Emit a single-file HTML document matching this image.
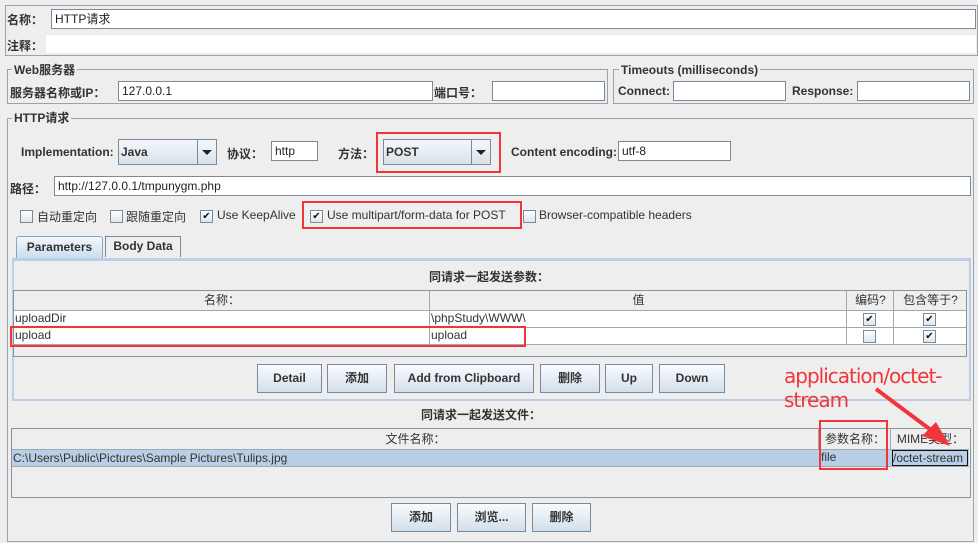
<!DOCTYPE html>
<html><head><meta charset="utf-8"><style>
*{box-sizing:border-box;margin:0;padding:0}
body{width:978px;height:543px;background:#eeeeee;position:relative;overflow:hidden;font-family:"Liberation Sans","Noto Sans CJK SC",sans-serif;font-size:12px;color:#333}
div,span{position:absolute}
.b{font-weight:bold;color:#333}
.inp{background:#fff;border:1px solid #7a8a99;height:20px;padding:2px 3px;line-height:14px;color:#222;white-space:nowrap}
.fs{border:1px solid #9aa3ad}
.lg{background:#eeeeee;padding:0 2px;font-weight:bold;color:#333;line-height:14px}
.btn{border:1px solid #7a8a99;background:linear-gradient(#f8fbfe,#d3dfeb);height:29px;line-height:27px;text-align:center;font-weight:bold;color:#333}
.cb{width:13px;height:13px;border:1px solid #7a8a99;background:linear-gradient(#fff,#dde6ef);font-size:10px;line-height:11px;text-align:center;color:#111}
.red{border:2px solid #f0363a}
.cell{border-right:1px solid #a0a8b0;border-bottom:1px solid #a0a8b0;height:100%;top:0;line-height:18px;padding-left:1px;white-space:nowrap}
</style></head><body>
<div class="fs" style="left:5px;top:5px;width:973px;height:51px"></div>
<div class="b" style="left:7px;top:11px">名称：</div>
<div class="inp" style="left:51px;top:9px;width:925px">HTTP请求</div>
<div class="b" style="left:7px;top:37px">注释：</div>
<div style="left:46px;top:35px;width:930px;height:18px;background:#fff"></div>

<div class="fs" style="left:7px;top:69px;width:601px;height:35px"></div>
<div class="lg" style="left:12px;top:63px">Web服务器</div>
<div class="b" style="left:10px;top:84px">服务器名称或IP：</div>
<div class="inp" style="left:118px;top:81px;width:315px">127.0.0.1</div>
<div class="b" style="left:434px;top:84px">端口号：</div>
<div class="inp" style="left:492px;top:81px;width:113px"></div>

<div class="fs" style="left:613px;top:69px;width:361px;height:35px"></div>
<div class="lg" style="left:619px;top:63px">Timeouts (milliseconds)</div>
<div class="b" style="left:618px;top:84px">Connect:</div>
<div class="inp" style="left:673px;top:81px;width:113px"></div>
<div class="b" style="left:792px;top:84px">Response:</div>
<div class="inp" style="left:857px;top:81px;width:113px"></div>

<div class="fs" style="left:7px;top:118px;width:967px;height:424px"></div>
<div class="lg" style="left:12px;top:111px">HTTP请求</div>
<div class="b" style="left:21px;top:145px">Implementation:</div>
<div style="left:118px;top:139px;width:99px;height:26px;border:1px solid #7a8a99;background:linear-gradient(#f5f8fb,#d7e1ea)"><span class="b" style="left:2px;top:5px">Java</span><span style="left:78px;top:0;width:1px;height:24px;background:#7a8a99"></span><span style="left:83px;top:10px;border-left:5px solid transparent;border-right:5px solid transparent;border-top:5px solid #222"></span></div>
<div class="b" style="left:227px;top:145px">协议：</div>
<div class="inp" style="left:271px;top:141px;width:47px">http</div>
<div class="b" style="left:338px;top:145px">方法：</div>
<div style="left:383px;top:139px;width:108px;height:26px;border:1px solid #7a8a99;background:linear-gradient(#f5f8fb,#d7e1ea)"><span class="b" style="left:2px;top:5px">POST</span><span style="left:87px;top:0;width:1px;height:24px;background:#7a8a99"></span><span style="left:92px;top:10px;border-left:5px solid transparent;border-right:5px solid transparent;border-top:5px solid #222"></span></div>
<div class="red" style="left:376px;top:132px;width:125px;height:41px"></div>
<div class="b" style="left:511px;top:145px">Content encoding:</div>
<div class="inp" style="left:618px;top:141px;width:113px">utf-8</div>
<div class="b" style="left:10px;top:180px">路径：</div>
<div class="inp" style="left:54px;top:176px;width:917px">http://127.0.0.1/tmpunygm.php</div>

<div class="cb" style="left:20px;top:210px"></div><div style="left:37px;top:208px">自动重定向</div>
<div class="cb" style="left:110px;top:210px"></div><div style="left:126px;top:208px">跟随重定向</div>
<div class="cb" style="left:200px;top:210px">✔</div><div style="left:217px;top:208px">Use KeepAlive</div>
<div class="cb" style="left:310px;top:210px">✔</div><div style="left:327px;top:208px">Use multipart/form-data for POST</div>
<div class="red" style="left:302px;top:201px;width:220px;height:28px"></div>
<div class="cb" style="left:523px;top:210px"></div><div style="left:539px;top:208px">Browser-compatible headers</div>

<div style="left:16px;top:236px;width:87px;height:23px;border:1px solid #8aa5c0;border-bottom:none;background:linear-gradient(#f3f7fb,#c9dcef);border-radius:3px 3px 0 0;text-align:center;line-height:20px;font-weight:bold;color:#333">Parameters</div>
<div style="left:105px;top:236px;width:76px;height:21px;border:1px solid #7a8a99;border-bottom:none;text-align:center;line-height:19px;font-weight:bold;color:#333">Body Data</div>
<div style="left:12px;top:258px;width:959px;height:143px;border:2px solid #b8cfe5;border-top:3px solid #b8cfe5"></div>
<div class="b" style="left:0;width:978px;text-align:center;top:268px">同请求一起发送参数：</div>
<div style="left:13px;top:290px;width:954px;height:67px;border:1px solid #8a939c;background:#eeeeee"></div>
<div style="left:14px;top:291px;width:952px;height:20px;background:#eeeeee">
<div class="cell" style="left:0;width:416px;text-align:center">名称：</div>
<div class="cell" style="left:416px;width:417px;text-align:center">值</div>
<div class="cell" style="left:833px;width:47px;text-align:center">编码?</div>
<div class="cell" style="left:880px;width:72px;text-align:center;border-right:none">包含等于?</div></div>
<div style="left:14px;top:311px;width:952px;height:17px;background:#fff">
<div class="cell" style="left:0;width:416px;line-height:15px">uploadDir</div>
<div class="cell" style="left:416px;width:417px;line-height:15px">\phpStudy\WWW\</div>
<div class="cell" style="left:833px;width:47px"></div><div class="cell" style="left:880px;width:72px;border-right:none"></div>
<div class="cb" style="left:849px;top:2px">✔</div><div class="cb" style="left:909px;top:2px">✔</div></div>
<div style="left:14px;top:328px;width:952px;height:17px;background:#fff">
<div class="cell" style="left:0;width:416px;line-height:15px">upload</div>
<div class="cell" style="left:416px;width:417px;line-height:15px">upload</div>
<div class="cell" style="left:833px;width:47px"></div><div class="cell" style="left:880px;width:72px;border-right:none"></div>
<div class="cb" style="left:849px;top:2px"></div><div class="cb" style="left:909px;top:2px">✔</div></div>
<div class="red" style="left:10px;top:326px;width:516px;height:21px"></div>

<div class="btn" style="left:257px;top:364px;width:65px">Detail</div>
<div class="btn" style="left:327px;top:364px;width:60px">添加</div>
<div class="btn" style="left:394px;top:364px;width:140px">Add from Clipboard</div>
<div class="btn" style="left:540px;top:364px;width:60px">删除</div>
<div class="btn" style="left:605px;top:364px;width:48px">Up</div>
<div class="btn" style="left:659px;top:364px;width:66px">Down</div>

<div class="b" style="left:0;width:962px;text-align:center;top:406px">同请求一起发送文件：</div>
<div style="left:11px;top:428px;width:960px;height:70px;border:1px solid #8a939c"></div>
<div style="left:12px;top:429px;width:957px;height:21px">
<div class="cell" style="left:0;width:807px;text-align:center;line-height:20px">文件名称：</div>
<div class="cell" style="left:807px;width:72px;text-align:center;line-height:20px">参数名称：</div>
<div class="cell" style="left:879px;width:78px;text-align:center;line-height:20px;border-right:none">MIME类型：</div></div>
<div style="left:12px;top:450px;width:957px;height:17px;background:#b8cfe5;border-bottom:1px solid #a0a8b0">
<span style="left:1px;top:0;line-height:16px">C:\Users\Public\Pictures\Sample Pictures\Tulips.jpg</span>
<span style="left:809px;top:0;line-height:14px">file</span>
<span style="left:880px;top:0;width:76px;height:16px;border:1px solid #111;line-height:14px;white-space:nowrap;overflow:hidden">/octet-stream</span></div>
<div class="red" style="left:819px;top:420px;width:69px;height:50px"></div>

<div class="btn" style="left:391px;top:503px;width:60px">添加</div>
<div class="btn" style="left:457px;top:503px;width:69px">浏览...</div>
<div class="btn" style="left:532px;top:503px;width:59px">删除</div>

<div style="left:784px;top:364px;color:#f0363a;font-size:20px;line-height:24px;font-family:'DejaVu Sans',sans-serif;letter-spacing:-1px">application/octet-<br>stream</div>
<svg style="position:absolute;left:0;top:0" width="978" height="543"><path d="M876 389 L935 433" stroke="#f0363a" stroke-width="4"/><polygon points="950,446 922,436 936,422" fill="#f0363a"/></svg>
</body></html>
